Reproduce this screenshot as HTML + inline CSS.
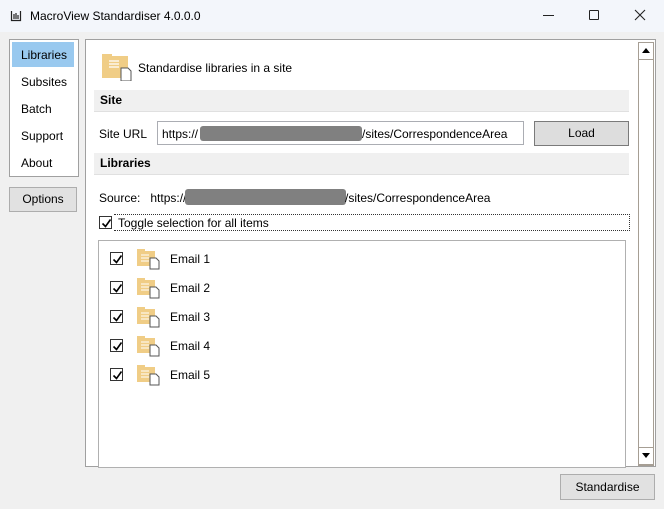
<!DOCTYPE html>
<html><head><style>
*{box-sizing:border-box;margin:0;padding:0}
body{width:664px;height:509px;background:#f0f0f0;font-family:"Liberation Sans",sans-serif;font-size:12px;color:#000;position:relative;overflow:hidden}
.a{position:absolute}
.title{left:0;top:0;width:664px;height:32px;background:#f3f6fb}
.btn{background:#e1e1e1;border:1px solid #adadad;text-align:center;line-height:22px}
.hdr{background:#f0f0f0;border-bottom:1px solid #e0e0e0;font-weight:bold;padding-left:6px;line-height:21px;height:22px}
.cb{width:13px;height:13px;border:1px solid #333;background:#fff}
.cb svg{position:absolute;left:1px;top:1px}
.red{background:#808080;border-radius:3px}
</style></head><body>
<div class="a title"></div>
<svg class="a" style="left:10px;top:10px" width="12" height="12"><path d="M1.5 1v9.5h9V1M4 4v5M6 3v6M8 5v4" stroke="#222" fill="none" stroke-width="1.2"/></svg>
<div class="a" style="left:30px;top:9px;font-size:12px">MacroView Standardiser 4.0.0.0</div>
<div class="a" style="left:543px;top:15px;width:11px;height:1px;background:#222"></div>
<div class="a" style="left:589px;top:10px;width:10px;height:10px;border:1px solid #222;border-radius:1px"></div>
<svg class="a" style="left:634px;top:9px" width="12" height="12"><path d="M1 1l10 10M11 1L1 11" stroke="#222" stroke-width="1.1"/></svg>

<div class="a" style="left:9px;top:39px;width:70px;height:138px;background:#fff;border:1px solid #a0a0a0"></div>
<div class="a" style="left:12px;top:42px;width:62px;height:25px;background:#99c9ef"></div>
<div class="a" style="left:21px;top:48px">Libraries</div>
<div class="a" style="left:21px;top:75px">Subsites</div>
<div class="a" style="left:21px;top:102px">Batch</div>
<div class="a" style="left:21px;top:129px">Support</div>
<div class="a" style="left:21px;top:156px">About</div>
<div class="a btn" style="left:9px;top:187px;width:68px;height:25px">Options</div>

<div class="a" style="left:85px;top:39px;width:571px;height:428px;background:#fff;border:1px solid #a0a0a0"></div>
<div class="a" style="left:638px;top:42px;width:16px;height:424px;border:1px solid #a69e94;background:#fff"></div>
<div class="a" style="left:638px;top:42px;width:16px;height:18px;border:1px solid #a69e94"></div>
<svg class="a" style="left:642px;top:48px" width="8" height="5"><path d="M0 5L4 0L8 5Z"/></svg>
<div class="a" style="left:638px;top:447px;width:16px;height:18px;border:1px solid #a69e94"></div>
<svg class="a" style="left:642px;top:453px" width="8" height="5"><path d="M0 0L4 5L8 0Z"/></svg>

<svg class="a" style="left:101px;top:53px" width="32" height="28"><rect x="1" y="3" width="26" height="22" fill="#f0cd86"/><rect x="1" y="1" width="10" height="3" fill="#f0cd86"/><path d="M8 8h10M8 11h10M8 14h10" stroke="#fff" stroke-width="1.2"/><path d="M20 15h7l3 3v10h-10z" fill="#fff" stroke="#555"/></svg>
<div class="a" style="left:138px;top:61px">Standardise libraries in a site</div>

<div class="a hdr" style="left:94px;top:90px;width:535px">Site</div>
<div class="a" style="left:99px;top:127px">Site URL</div>
<div class="a" style="left:157px;top:121px;width:367px;height:24px;border:1px solid #abadb3;background:#fff"></div>
<div class="a" style="left:162px;top:127px">https://</div>
<div class="a red" style="left:200px;top:126px;width:162px;height:15px"></div>
<div class="a" style="left:362px;top:127px">/sites/CorrespondenceArea</div>
<div class="a btn" style="left:534px;top:121px;width:95px;height:25px;border-color:#7a7a7a;background:#dddddd">Load</div>

<div class="a hdr" style="left:94px;top:153px;width:535px">Libraries</div>
<div class="a" style="left:99px;top:191px">Source:&nbsp;&nbsp; https://</div>
<div class="a red" style="left:185px;top:189px;width:161px;height:16px"></div>
<div class="a" style="left:345px;top:191px">/sites/CorrespondenceArea</div>

<div class="a cb" style="left:99px;top:216px"><svg width="11" height="11"><path d="M1.5 5.5l3 3l5-7" stroke="#000" stroke-width="1.6" fill="none"/></svg></div>
<div class="a" style="left:114px;top:214px;width:516px;height:17px;border:1px dotted #333;border-left:none"></div>
<div class="a" style="left:118px;top:216px">Toggle selection for all items</div>

<div class="a" style="left:98px;top:240px;width:528px;height:228px;border:1px solid #b0b0b0;background:#fff"></div>

<div class="a" style="left:560px;top:474px;width:95px;height:26px;border:1px solid #adadad;background:#e1e1e1;text-align:center;line-height:24px">Standardise</div>

<div id="items"></div>
<script>
var h='';for(var i=0;i<5;i++){var y=252+i*29;
h+='<div class="a cb" style="left:110px;top:'+y+'px"><svg width="11" height="11"><path d="M1.5 5.5l3 3l5-7" stroke="#000" stroke-width="1.6" fill="none"/></svg></div>'+
'<svg class="a" style="left:136px;top:'+(y-4)+'px" width="24" height="22"><rect x="1" y="3" width="18" height="15" fill="#f0cd86"/><rect x="1" y="1" width="8" height="3" fill="#f0cd86"/><path d="M5 7h8M5 10h8M5 13h8" stroke="#fff"/><path d="M14 10h6l3 3v8h-9z" fill="#fff" stroke="#555"/></svg>'+
'<div class="a" style="left:170px;top:'+(y)+'px">Email '+(i+1)+'</div>';}
document.getElementById('items').innerHTML=h;
</script>
</body></html>
